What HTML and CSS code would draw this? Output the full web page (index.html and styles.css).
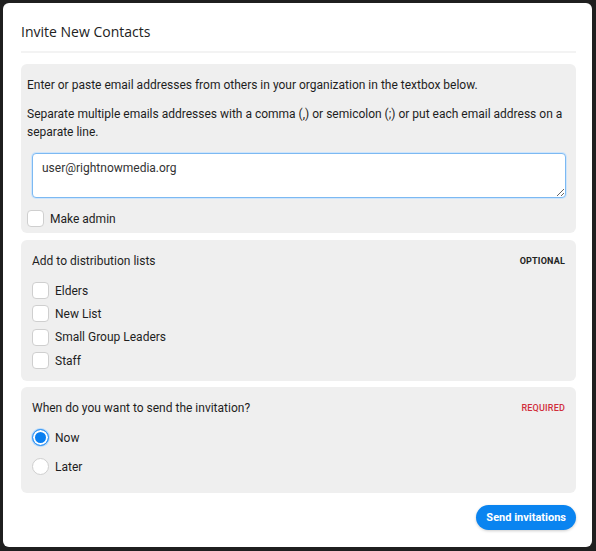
FILE: index.html
```html
<!DOCTYPE html>
<html lang="en">
<head>
    <meta charset="UTF-8">
    <meta name="viewport" content="width=device-width, initial-scale=1.0">
    <title>Invite New Contacts</title>
    <link rel="stylesheet" href="styles.css">
</head>
<body>
    <div class="modal">
        <h2 class="modal-title">Invite New Contacts</h2>

        <div class="section section-emails">
            <p>Enter or paste email addresses from others in your organization in the textbox below.</p>
            <p>Separate multiple emails addresses with a comma (,) or semicolon (;) or put each email address on a separate line.</p>
            <textarea class="emails">user@rightnowmedia.org</textarea>
            <label class="check-row">
                <input type="checkbox" class="check">
                <span>Make admin</span>
            </label>
        </div>

        <div class="section section-lists">
            <div class="section-head">
                <span>Add to distribution lists</span>
                <span class="tag">OPTIONAL</span>
            </div>
            <div class="list">
                <label class="check-row"><input type="checkbox" class="check"><span>Elders</span></label>
                <label class="check-row"><input type="checkbox" class="check"><span>New List</span></label>
                <label class="check-row"><input type="checkbox" class="check"><span>Small Group Leaders</span></label>
                <label class="check-row"><input type="checkbox" class="check"><span>Staff</span></label>
            </div>
        </div>

        <div class="section section-when">
            <div class="section-head">
                <span>When do you want to send the invitation?</span>
                <span class="tag tag-required">REQUIRED</span>
            </div>
            <div class="list list-radio">
                <label class="check-row"><input type="radio" name="when" class="radio" checked><span>Now</span></label>
                <label class="check-row"><input type="radio" name="when" class="radio"><span>Later</span></label>
            </div>
        </div>

        <div class="actions">
            <button class="btn-send">Send invitations</button>
        </div>
    </div>
</body>
</html>
```

FILE: styles.css
```css
body {
    margin: 0;
    padding: 3px;
    background-color: #1f1f1f;
    font-family: Roboto, "Liberation Sans", sans-serif;
    font-size: 12px;
    color: #1e1e1e;
}
.modal {
    width: 589px;
    height: 544px;
    box-sizing: border-box;
    background-color: #fff;
    border-radius: 6px;
    padding: 18px 16px 0 18px;
}
.modal-title {
    margin: 0;
    font-family: "Open Sans", sans-serif;
    font-weight: 400;
    font-size: 14px;
    line-height: 22px;
    color: #222;
    padding-bottom: 8px;
    border-bottom: 2px solid #f3f3f3;
    margin-bottom: 11px;
}
.section {
    background-color: #efefef;
    border-radius: 6px;
    padding: 11px;
}
.section-emails {
    padding: 12px 10px 6px 6px;
    margin-bottom: 7px;
}
.section-lists {
    padding-top: 12px;
    padding-bottom: 12px;
    margin-bottom: 6px;
}
.section-when {
    padding-top: 12px;
    padding-bottom: 18px;
}
.section p {
    margin: 0 0 11px 0;
    line-height: 18px;
}
.section p + p {
    margin-bottom: 12px;
}
.emails {
    display: block;
    box-sizing: border-box;
    width: calc(100% - 5px);
    height: 45px;
    margin: 0 0 12px 5px;
    padding: 7px 9px;
    border: 1px solid #7cb9f2;
    border-radius: 4px;
    box-shadow: 0 0 0 1px #cfe5fb;
    font-family: Roboto, sans-serif;
    font-size: 12px;
    color: #333;
    outline: none;
}
.check-row {
    display: flex;
    align-items: center;
    gap: 6px;
    height: 17px;
}
.check,
.radio {
    appearance: none;
    margin: 0;
    width: 17px;
    height: 17px;
    background-color: #fff;
    border: 1px solid #cfcfcf;
    border-radius: 4px;
}
.radio {
    border-radius: 50%;
}
.radio:checked {
    background-color: #0a7ff0;
    border-color: #3b98f3;
    box-shadow: inset 0 0 0 2px #fff, 0 0 0 1px #b9dbfb;
}
.section-head {
    display: flex;
    justify-content: space-between;
    align-items: center;
    line-height: 18px;
    margin-bottom: 12px;
}
.tag {
    font-size: 9px;
    font-weight: 700;
    letter-spacing: 0.2px;
    color: #222;
}
.tag-required {
    color: #d12d3a;
    font-weight: 500;
}
.list {
    display: flex;
    flex-direction: column;
    gap: 6.4px;
}
.list-radio {
    gap: 12px;
}
.actions {
    display: flex;
    justify-content: flex-end;
    padding-top: 12px;
}
.btn-send {
    height: 25px;
    padding: 0 10px;
    border: none;
    border-radius: 13px;
    background-color: #0a84f0;
    color: #fff;
    font-family: Roboto, sans-serif;
    font-weight: 700;
    font-size: 11px;
    box-shadow: 0 1px 3px rgba(0, 0, 0, 0.2);
}
```
